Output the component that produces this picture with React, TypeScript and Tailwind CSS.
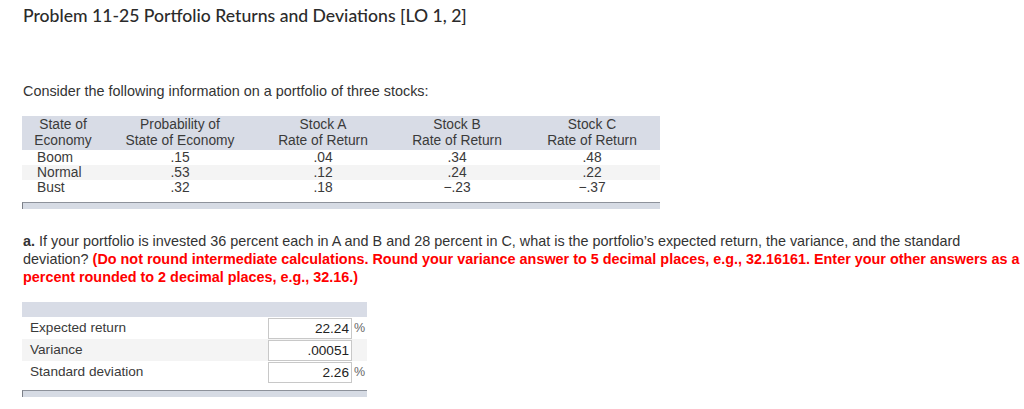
const rows = [
  { state: "Boom", p: ".15", a: ".04", b: ".34", c: ".48" },
  { state: "Normal", p: ".53", a: ".12", b: ".24", c: ".22" },
  { state: "Bust", p: ".32", a: ".18", b: "\u2212.23", c: "\u2212.37" },
];

const answers = [
  { label: "Expected return", value: "22.24", unit: "%" },
  { label: "Variance", value: ".00051", unit: "" },
  { label: "Standard deviation", value: "2.26", unit: "%" },
];

const Footer = () => (
  <div className="h-[7px] bg-[#d6dbe4] border-t border-t-[#8d929b] border-l border-l-[#7c8088]"></div>
);

export default function App() {
  return (
    <div className="w-[1024px] h-[409px] bg-white overflow-hidden pl-[22px] pt-[3px] text-[#333] font-['Liberation_Sans',Arial,sans-serif]">
      <h1 className="text-[17.6px] leading-[26px] font-['Lato',sans-serif] font-medium text-[#2b2b2b] pl-px">
        Problem 11-25 Portfolio Returns and Deviations [LO 1, 2]
      </h1>

      <p className="mt-[53px] text-[14.4px] leading-[18px] pl-px">
        Consider the following information on a portfolio of three stocks:
      </p>

      <div className="mt-[16px] w-[638px] text-[13.8px] text-[#3a3a3a]">
        <div className="grid grid-cols-[82px_152px_134px_134px_136px] bg-[#d8dce6] leading-[16px] pt-[1px] pb-[1px] text-center">
          <div>State of<br />Economy</div>
          <div>Probability of<br />State of Economy</div>
          <div>Stock A<br />Rate of Return</div>
          <div>Stock B<br />Rate of Return</div>
          <div>Stock C<br />Rate of Return</div>
        </div>
        {rows.map((r, i) => (
          <div
            key={r.state}
            className={`grid grid-cols-[82px_152px_134px_134px_136px] h-[15px] leading-[15px] text-center ${i === 1 ? "bg-[#f4f4f4]" : ""}`}
          >
            <div className="text-left pl-[15px]">{r.state}</div>
            <div>{r.p}</div>
            <div>{r.a}</div>
            <div>{r.b}</div>
            <div>{r.c}</div>
          </div>
        ))}
        <div className="mt-[7px]">
          <Footer />
        </div>
      </div>

      <p className="mt-[23px] w-[1000px] text-[14.4px] leading-[18px] text-[#333] pl-px">
        <b>a.</b>
        <span> If your portfolio is invested 36 percent each in A and B and 28 percent in C, what is the portfolio’s expected return, the variance, and the standard deviation? </span>
        <b className="text-[#ff0000]">
          (Do not round intermediate calculations. Round your variance answer to 5 decimal places, e.g., 32.16161. Enter your other answers as a percent rounded to 2 decimal places, e.g., 32.16.)
        </b>
      </p>

      <div className="mt-[16px] w-[345px] text-[13.6px] text-[#3a3a3a]">
        <div className="h-[15px] bg-[#d8dce6]"></div>
        {answers.map((a, i) => (
          <div
            key={a.label}
            className={`flex items-center h-[22px] ${i === 1 ? "bg-[#f4f4f4]" : ""}`}
          >
            <div className="w-[246px] pl-[8px]">{a.label}</div>
            <div className="w-[84px] h-[21px] bg-white border border-[#c8c8c8] text-right pr-[2px] leading-[19px] text-[#222]">
              {a.value}
            </div>
            <div className="pl-[2px] text-[12.5px] text-[#666]">{a.unit}</div>
          </div>
        ))}
        <div className="mt-[7px]">
          <Footer />
        </div>
      </div>
    </div>
  );
}
